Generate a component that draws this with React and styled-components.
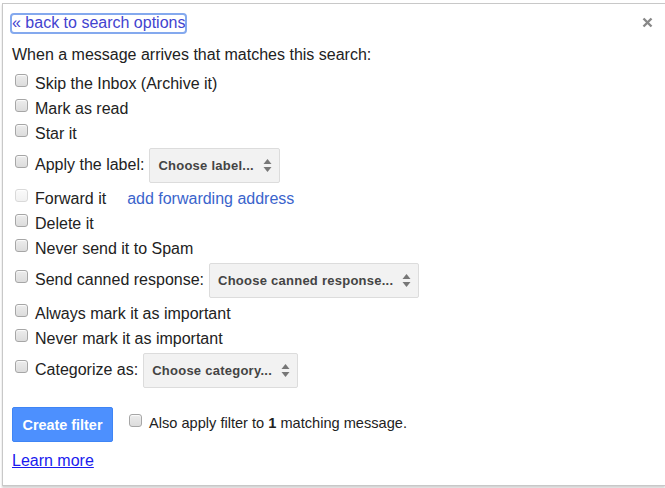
import React from 'react';
import styled, { createGlobalStyle } from 'styled-components';

const Global = createGlobalStyle`
  html, body {
    margin: 0;
    padding: 0;
    background: #fff;
    overflow: hidden;
  }
  body {
    font-family: "Liberation Sans", Arial, sans-serif;
  }
`;

const Page = styled.div`
  padding: 3px 0 0 2px;
  width: 665px;
  height: 488px;
  box-sizing: border-box;
`;

const Panel = styled.div`
  position: relative;
  width: 663px;
  height: 483px;
  box-sizing: border-box;
  border: 1px solid #c8c8c8;
  border-right: 0;
  box-shadow: 0 2px 2px rgba(0, 0, 0, 0.18);
  background: #fff;
  padding: 10px 0 0 9px;
  color: #222;
  font-size: 16px;
`;

const Close = styled.button`
  position: absolute;
  top: 9px;
  left: 635px;
  width: 18px;
  height: 18px;
  padding: 0;
  border: 0;
  background: none;
  display: flex;
  align-items: center;
  justify-content: center;
  cursor: pointer;
`;

const BackLink = styled.a`
  display: inline-block;
  color: #4343cf;
  text-decoration: none;
  font-size: 16px;
  line-height: 16px;
  padding: 0 0 1px 0;
  outline: 2px solid #84a9ee;
  outline-offset: 0;
  border-radius: 2px;
  cursor: pointer;
`;

const Intro = styled.div`
  margin-top: 13px;
  line-height: 20px;
  height: 20px;
`;

const List = styled.div`
  margin-top: 6px;
  display: flex;
  flex-direction: column;
`;

const Row = styled.label`
  display: flex;
  align-items: center;
  height: ${p => (p.$tall ? '37px' : '25px')};
  margin-bottom: ${p => (p.$tall ? '3px' : '0')};
`;

const Check = styled.input.attrs({ type: 'checkbox' })`
  appearance: none;
  -webkit-appearance: none;
  width: 13px;
  height: 13px;
  margin: 0 7px 6px 3px;
  box-sizing: border-box;
  border-radius: 3px;
  border: 1px solid ${p => (p.disabled ? '#d9d9d9' : '#a6a6a6')};
  background: ${p =>
    p.disabled
      ? 'linear-gradient(#fafafa, #f1f1f1)'
      : 'linear-gradient(#ececec, #dcdcdc)'};
  box-shadow: inset 0 1px 1px rgba(255, 255, 255, 0.8);
  flex: none;
`;

const Label = styled.span`
  white-space: nowrap;
`;

const SelectBox = styled.div`
  display: flex;
  align-items: center;
  gap: 9px;
  height: 35px;
  box-sizing: border-box;
  margin-left: 5px;
  margin-top: 2px;
  padding: 0 7px 0 8px;
  border: 1px solid #dcdcdc;
  border-radius: 2px;
  background: #f2f2f2;
  color: #444;
  font-size: 13px;
  font-weight: bold;
  letter-spacing: 0.25px;
  cursor: default;
`;

const Inline = styled.a`
  color: #3a64cc;
  margin-left: 21px;
  text-decoration: none;
  cursor: pointer;
`;

const Footer = styled.div`
  display: flex;
  align-items: flex-start;
  margin-top: 16px;
`;

const PrimaryButton = styled.button`
  width: 101px;
  height: 35px;
  border: 1px solid #3f85f5;
  border-radius: 2px;
  background: #4d90fe;
  color: #fff;
  font-family: "Liberation Sans", Arial, sans-serif;
  font-size: 14.4px;
  font-weight: bold;
  padding: 0;
  cursor: pointer;
`;

const AlsoApply = styled.label`
  display: flex;
  align-items: center;
  margin: 6px 0 0 13px;
  height: 20px;
  font-size: 14.6px;
  white-space: nowrap;
`;

const LearnMore = styled.a`
  display: inline-block;
  margin-top: 10px;
  color: #1a1aee;
  text-decoration: underline;
  font-size: 16px;
  cursor: pointer;
`;

const Arrows = () => (
  <svg width="9" height="15" viewBox="0 0 9 15">
    <path d="M4.5 1 L8.5 6 L0.5 6 Z" fill="#777" />
    <path d="M4.5 14 L8.5 9 L0.5 9 Z" fill="#777" />
  </svg>
);

const Select = ({ children }) => (
  <SelectBox>
    <span>{children}</span>
    <Arrows />
  </SelectBox>
);

export default function App() {
  return (
    <Page>
      <Global />
      <Panel>
        <Close aria-label="Close">
          <svg width="11" height="11" viewBox="0 0 11 11">
            <path d="M1.5 1.5 L9.5 9.5 M9.5 1.5 L1.5 9.5" stroke="#888" strokeWidth="2.4" />
          </svg>
        </Close>
        <BackLink>« back to search options</BackLink>
        <Intro>When a message arrives that matches this search:</Intro>
        <List>
          <Row><Check /><Label>Skip the Inbox (Archive it)</Label></Row>
          <Row><Check /><Label>Mark as read</Label></Row>
          <Row><Check /><Label>Star it</Label></Row>
          <Row $tall><Check /><Label>Apply the label:</Label><Select>Choose label...</Select></Row>
          <Row><Check disabled /><Label>Forward it</Label><Inline>add forwarding address</Inline></Row>
          <Row><Check /><Label>Delete it</Label></Row>
          <Row><Check /><Label>Never send it to Spam</Label></Row>
          <Row $tall><Check /><Label>Send canned response:</Label><Select>Choose canned response...</Select></Row>
          <Row><Check /><Label>Always mark it as important</Label></Row>
          <Row><Check /><Label>Never mark it as important</Label></Row>
          <Row $tall><Check /><Label>Categorize as:</Label><Select>Choose category...</Select></Row>
        </List>
        <Footer>
          <PrimaryButton>Create filter</PrimaryButton>
          <AlsoApply>
            <Check />
            <span>Also apply filter to <b>1</b> matching message.</span>
          </AlsoApply>
        </Footer>
        <LearnMore>Learn more</LearnMore>
      </Panel>
    </Page>
  );
}
